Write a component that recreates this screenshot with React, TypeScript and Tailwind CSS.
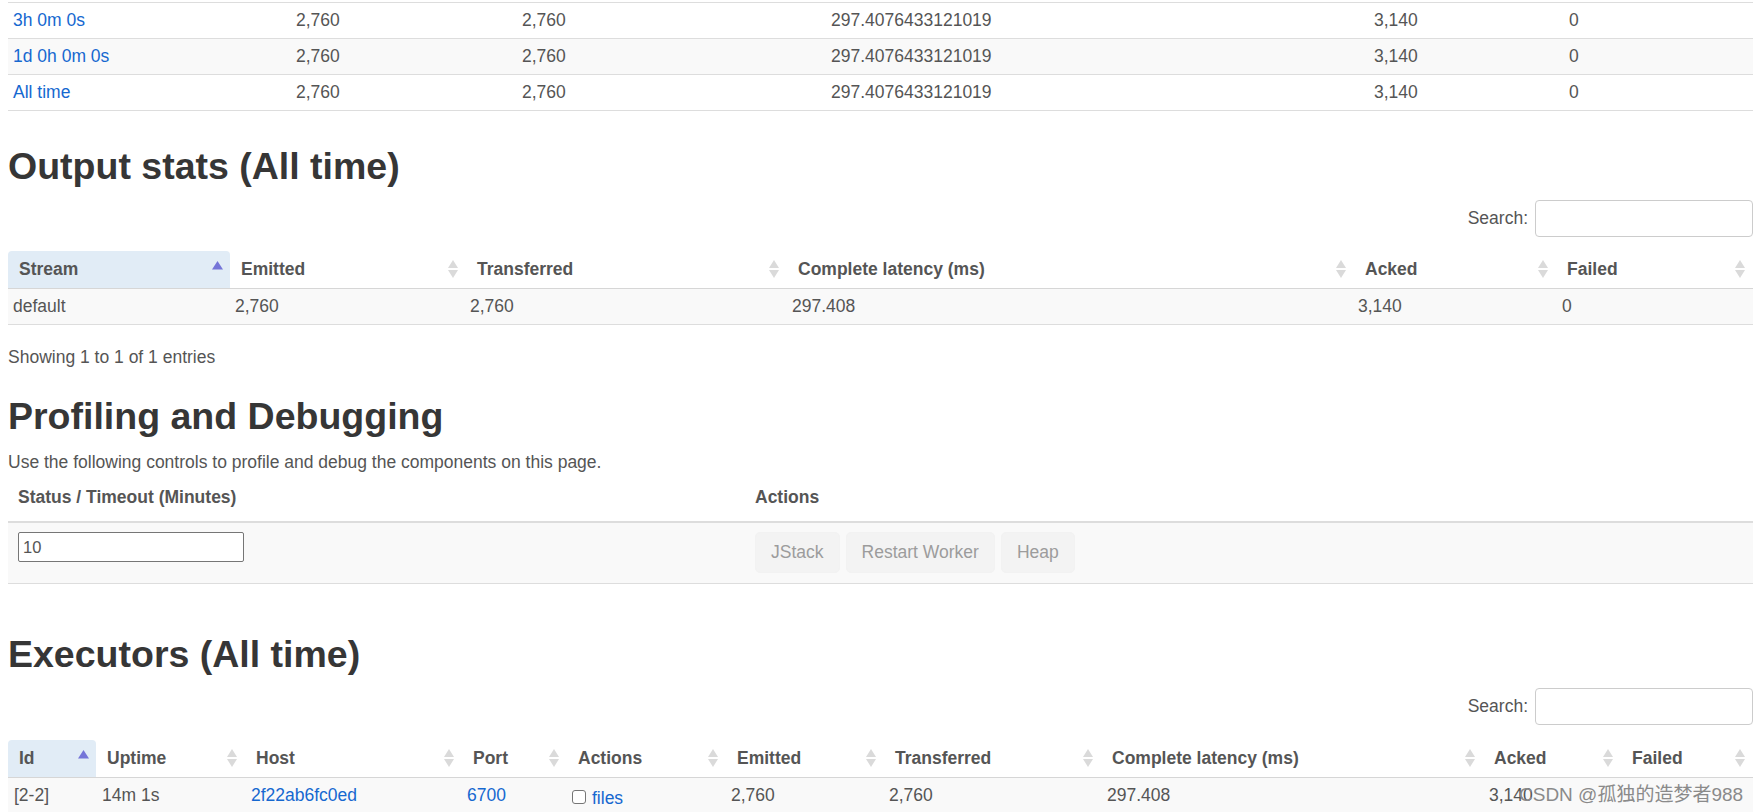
import React from 'react';

type Col = { label: string; active?: boolean };

const SortBoth: React.FC = () => (
  <svg width="10" height="18" viewBox="0 0 10 18" className="absolute right-[8px] top-[9px]">
    <polygon points="5,0 10,8 0,8" fill="#dadada" />
    <polygon points="0,10 10,10 5,18" fill="#dadada" />
  </svg>
);

const SortAsc: React.FC = () => (
  <svg width="11" height="18" viewBox="0 0 11 18" className="absolute right-[7px] top-[9px]">
    <polygon points="5.5,1 11,9.5 0,9.5" fill="#7575d8" />
  </svg>
);

const HeaderRow: React.FC<{ cols: Col[]; grid: string }> = ({ cols, grid }) => (
  <div className={`grid ${grid} h-[38px] border-b border-[#d6d6d6]`}>
    {cols.map((c) => (
      <div
        key={c.label}
        className={`relative flex items-center pl-[11px] font-bold text-[#555] ${c.active ? 'bg-[#e1ecf6] rounded-t-[4px]' : ''}`}
      >
        {c.label}
        {c.active ? <SortAsc /> : <SortBoth />}
      </div>
    ))}
  </div>
);

const SearchBox: React.FC = () => (
  <div className="flex justify-end items-center gap-[7px] mt-[13px]">
    <span className="text-[#555]">Search:</span>
    <input type="text" className="w-[218px] h-[37px] border border-[#cccccc] rounded-[4px] bg-white outline-none" />
  </div>
);

const Heading: React.FC<{ children: React.ReactNode; className?: string }> = ({ children, className }) => (
  <h2 className={`text-[37.5px] leading-[41px] font-bold text-[#363636] ${className ?? ''}`}>{children}</h2>
);

const windowRows = [
  ['3h 0m 0s', '2,760', '2,760', '297.4076433121019', '3,140', '0'],
  ['1d 0h 0m 0s', '2,760', '2,760', '297.4076433121019', '3,140', '0'],
  ['All time', '2,760', '2,760', '297.4076433121019', '3,140', '0'],
];

const streamCols: Col[] = [
  { label: 'Stream', active: true },
  { label: 'Emitted' },
  { label: 'Transferred' },
  { label: 'Complete latency (ms)' },
  { label: 'Acked' },
  { label: 'Failed' },
];

const executorCols: Col[] = [
  { label: 'Id', active: true },
  { label: 'Uptime' },
  { label: 'Host' },
  { label: 'Port' },
  { label: 'Actions' },
  { label: 'Emitted' },
  { label: 'Transferred' },
  { label: 'Complete latency (ms)' },
  { label: 'Acked' },
  { label: 'Failed' },
];

const App: React.FC = () => {
  return (
    <div className="relative min-h-[812px] bg-white font-['Liberation_Sans',Arial,sans-serif] text-[17.5px] leading-[25px] text-[#555] overflow-hidden">
      <div className="ml-[8px] w-[1745px]">
        {/* window stats (tail of table) */}
        <div className="mt-[2px] border-b border-[#dddddd]">
          {windowRows.map((r, i) => (
            <div
              key={r[0]}
              className={`grid grid-cols-[283px_226px_309px_543px_195px_189px] h-[36px] border-t border-[#dddddd] items-center ${i === 1 ? 'bg-[#f9f9f9]' : ''}`}
            >
              <a className="pl-[5px] text-[#1668d0]">{r[0]}</a>
              <span className="pl-[5px]">{r[1]}</span>
              <span className="pl-[5px]">{r[2]}</span>
              <span className="pl-[5px]">{r[3]}</span>
              <span className="pl-[5px]">{r[4]}</span>
              <span className="pl-[5px]">{r[5]}</span>
            </div>
          ))}
        </div>

        {/* Output stats */}
        <Heading className="mt-[35px]">Output stats (All time)</Heading>
        <SearchBox />
        <div className="mt-[14px]">
          <HeaderRow cols={streamCols} grid="grid-cols-[222px_236px_321px_567px_202px_197px]" />
          <div className="grid grid-cols-[222px_236px_321px_567px_202px_197px] h-[36px] items-center bg-[#f9f9f9] border-b border-[#dddddd]">
            <span className="pl-[5px]">default</span>
            <span className="pl-[5px]">2,760</span>
            <span className="pl-[4px]">2,760</span>
            <span className="pl-[5px]">297.408</span>
            <span className="pl-[4px]">3,140</span>
            <span className="pl-[6px]">0</span>
          </div>
        </div>
        <div className="mt-[20px]">Showing 1 to 1 of 1 entries</div>

        {/* Profiling */}
        <Heading className="mt-[26px]">Profiling and Debugging</Heading>
        <p className="mt-[13px]">Use the following controls to profile and debug the components on this page.</p>
        <div className="grid grid-cols-[737px_1008px] border-b-2 border-[#dddddd] font-bold pt-[10px] pb-[11px]">
          <div className="pl-[10px]">Status / Timeout (Minutes)</div>
          <div className="pl-[10px]">Actions</div>
        </div>
        <div className="grid grid-cols-[737px_1008px] bg-[#f9f9f9] border-b border-[#dddddd] pt-[9px] pb-[10px] items-start">
          <div className="pl-[10px]">
            <input
              type="text"
              defaultValue="10"
              className="w-[226px] h-[30px] border border-[#767676] rounded-[2px] bg-white pl-[4px] text-[16.5px] text-[#555] outline-none"
            />
          </div>
          <div className="pl-[10px] flex gap-[6px]">
            <button className="h-[41px] px-[15px] rounded-[5px] bg-[#f3f3f3] border border-[#f2f2f2] text-[#9c9c9c]">JStack</button>
            <button className="h-[41px] px-[15px] rounded-[5px] bg-[#f3f3f3] border border-[#f2f2f2] text-[#9c9c9c]">Restart Worker</button>
            <button className="h-[41px] px-[15px] rounded-[5px] bg-[#f3f3f3] border border-[#f2f2f2] text-[#9c9c9c]">Heap</button>
          </div>
        </div>

        {/* Executors */}
        <Heading className="mt-[50px]">Executors (All time)</Heading>
        <SearchBox />
        <div className="mt-[15px]">
          <HeaderRow
            cols={executorCols}
            grid="grid-cols-[88px_149px_217px_105px_159px_158px_217px_382px_138px_132px]"
          />
          <div className="grid grid-cols-[88px_149px_217px_105px_159px_158px_217px_382px_138px_132px] h-[36px] items-center bg-[#f9f9f9] border-b border-[#dddddd]">
            <span className="pl-[6px]">[2-2]</span>
            <span className="pl-[6px]">14m 1s</span>
            <a className="pl-[6px] text-[#1668d0]">2f22ab6fc0ed</a>
            <a className="pl-[5px] text-[#1668d0]">6700</a>
            <div className="pl-[5px] flex items-center">
              <span className="w-[14px] h-[14px] mt-[2px] border border-[#767676] rounded-[3px] bg-white" />
              <a className="ml-[6px] mt-[6px] text-[#1668d0]">files</a>
            </div>
            <span className="pl-[5px]">2,760</span>
            <span className="pl-[5px]">2,760</span>
            <span className="pl-[6px]">297.408</span>
            <span className="pl-[6px]">3,140</span>
            <span className="pl-[6px]"></span>
          </div>
        </div>
      </div>

      {/* watermark */}
      <div className="absolute left-[1519px] top-[785px] text-[19px] leading-[19px] text-[#8a8a8a] whitespace-nowrap font-['Liberation_Sans','Noto_Sans_CJK_SC',sans-serif]">
        CSDN @孤独的造梦者988
      </div>
    </div>
  );
};

export default App;
